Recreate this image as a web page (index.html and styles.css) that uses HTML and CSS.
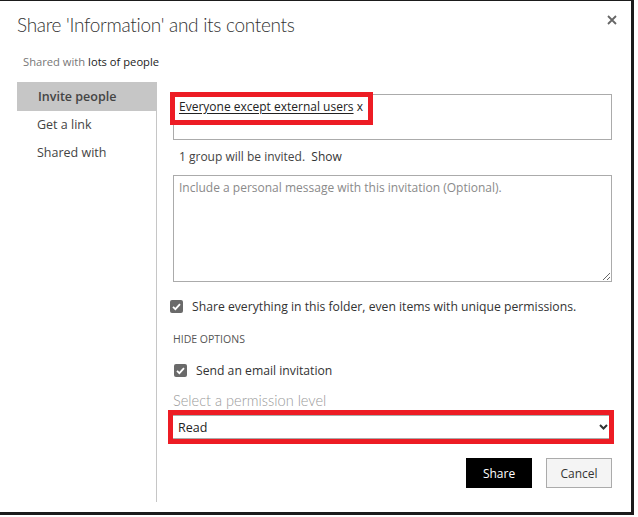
FILE: index.html
```html
<!DOCTYPE html>
<html lang="en">
<head>
  <meta charset="UTF-8">
  <meta name="viewport" content="width=device-width, initial-scale=1">
  <title>Share 'Information'</title>
  <link rel="stylesheet" href="styles.css">
</head>

<body>

  <div class="dialog">
    <div class="dialog-header">
      <h1 class="title">Share 'Information' and its contents</h1>
      <button class="close-btn" title="Close">
        <svg width="10" height="10" viewBox="0 0 10 10">
          <path d="M1 1 L9 9 M9 1 L1 9" stroke="#666" stroke-width="1.8" fill="none"/>
        </svg>
      </button>
    </div>

    <div class="shared-summary">Shared with <span class="who">lots of people</span></div>

    <div class="dialog-body">
      <!-- Menu laterale -->
      <ul class="side-nav">
        <li class="active">Invite people</li>
        <li>Get a link</li>
        <li>Shared with</li>
      </ul>

      <div class="invite-panel">
        <div class="people-picker">
          <span class="token"><u>Everyone except external users</u> x</span>
        </div>

        <div class="invite-status">1 group will be invited.&nbsp; <a href="javascript:void(0);">Show</a></div>

        <textarea class="message" placeholder="Include a personal message with this invitation (Optional)."></textarea>

        <label class="check-row">
          <span class="check">
            <svg width="13" height="13" viewBox="0 0 13 13">
              <rect width="13" height="13" rx="2" fill="#6a6a6a"/>
              <path d="M3 6.8 L5.4 9.1 L10 4.2" stroke="#fff" stroke-width="1.8" fill="none"/>
            </svg>
          </span>
          Share everything in this folder, even items with unique permissions.
        </label>

        <div class="hide-options">HIDE OPTIONS</div>

        <label class="check-row email-row">
          <span class="check">
            <svg width="13" height="13" viewBox="0 0 13 13">
              <rect width="13" height="13" rx="2" fill="#6a6a6a"/>
              <path d="M3 6.8 L5.4 9.1 L10 4.2" stroke="#fff" stroke-width="1.8" fill="none"/>
            </svg>
          </span>
          Send an email invitation
        </label>

        <div class="perm-label">Select a permission level</div>
        <div class="perm-highlight">
          <div class="perm-select">
            <span>Read</span>
            <svg width="9" height="6" viewBox="0 0 9 6">
              <path d="M1 1 L4.5 4.5 L8 1" stroke="#333" stroke-width="2" fill="none"/>
            </svg>
          </div>
        </div>

        <div class="actions">
          <button class="share-btn">Share</button>
          <button class="cancel-btn">Cancel</button>
        </div>
      </div>
    </div>
  </div>

</body>
</html>
```

FILE: styles.css
```css
* {
  margin: 0;
  padding: 0;
  box-sizing: border-box;
}
body {
  font-family: 'Open Sans', 'Noto Sans', sans-serif;
  background: #fff;
  color: #444;
  font-size: 12px;
}
.dialog {
  width: 634px;
  height: 515px;
  border-top: 1px solid #1b1b1b;
  border-right: 3px solid #1b1b1b;
  border-bottom: 3px solid #1b1b1b;
  background: #fff;
}
.dialog-header {
  display: flex;
  justify-content: space-between;
  align-items: flex-start;
  padding: 12px 14px 0 17px;
}
.title {
  font-family: 'Lato', 'Open Sans', sans-serif;
  font-size: 19px;
  font-weight: 300;
  letter-spacing: -0.3px;
  line-height: 24px;
  color: #333;
}
.close-btn {
  margin-top: 2px;
  width: 10px;
  height: 10px;
  border: none;
  background: none;
  cursor: pointer;
  display: flex;
}
.shared-summary {
  margin-top: 17px;
  padding-left: 23px;
  line-height: 16px;
  font-size: 11.2px;
  color: #777;
}
.shared-summary .who {
  color: #222;
}

/* Corpo */
.dialog-body {
  display: flex;
  margin: 12px 0 0 17px;
  height: 420px;
}
.side-nav {
  list-style: none;
  flex-shrink: 0;
  width: 140px;
  border-right: 1px solid #c6c6c6;
}
.side-nav li {
  height: 28px;
  line-height: 28px;
  padding-left: 20px;
  font-size: 12.5px;
  color: #444;
  cursor: pointer;
}
.side-nav li.active {
  height: 29px;
  line-height: 29px;
  padding-left: 21px;
  background: #c6c6c6;
  font-weight: 600;
}
.invite-panel {
  flex: 1;
  min-width: 0;
  padding: 0 19px 0 16px;
  display: flex;
  flex-direction: column;
}
.people-picker {
  margin-top: 12px;
  height: 46px;
  border: 1px solid #ababab;
  padding: 2px 0 0 1px;
}
.token {
  display: inline-block;
  padding: 1px 5px 5px 4px;
  line-height: 17px;
  font-size: 12px;
  color: #222;
  outline: 5px solid #ed1c24;
}
.token u {
  text-underline-offset: 2px;
}
.invite-status {
  margin-top: 8px;
  padding-left: 6px;
  line-height: 17px;
  font-size: 12px;
  color: #444;
}
.invite-status a {
  color: #333;
  text-decoration: none;
}
.message {
  margin-top: 10px;
  height: 107px;
  border: 1px solid #ababab;
  padding: 3px 5px;
  font-family: inherit;
  font-size: 12px;
  line-height: 17px;
  resize: both;
  color: #444;
}
.message::placeholder {
  color: #8a8a8a;
}
.check-row {
  display: flex;
  align-items: center;
  margin-top: 16px;
  margin-left: -3px;
  line-height: 17px;
  font-size: 12.2px;
  color: #333;
}
.check {
  display: flex;
  margin-right: 9px;
}
.hide-options {
  margin-top: 17px;
  line-height: 15px;
  font-size: 10.5px;
  color: #555;
}
.email-row {
  margin-top: 15px;
  margin-left: 1px;
}
.perm-label {
  margin-top: 13px;
  line-height: 18px;
  font-family: 'Lato', 'Open Sans', sans-serif;
  font-size: 14.6px;
  font-weight: 300;
  color: #9a9a9a;
}
.perm-highlight {
  margin: 0 -2px 0 -5px;
  border: 5px solid #ed1c24;
}
.perm-select {
  height: 24px;
  display: flex;
  align-items: center;
  justify-content: space-between;
  border-top: 1px solid #ababab;
  border-bottom: 1px solid #ababab;
  padding: 0 0 0 5px;
  font-size: 12.5px;
  color: #222;
  background: #fff;
}
.perm-select svg {
  margin-right: 1px;
}
.actions {
  margin-top: 14px;
  display: flex;
  justify-content: flex-end;
  gap: 14px;
}
.actions button {
  width: 66px;
  height: 30px;
  font-family: inherit;
  font-size: 12px;
  cursor: pointer;
}
.share-btn {
  background: #000;
  color: #fff;
  border: none;
}
.cancel-btn {
  background: #f4f4f4;
  color: #333;
  border: 1px solid #ababab;
}
```
